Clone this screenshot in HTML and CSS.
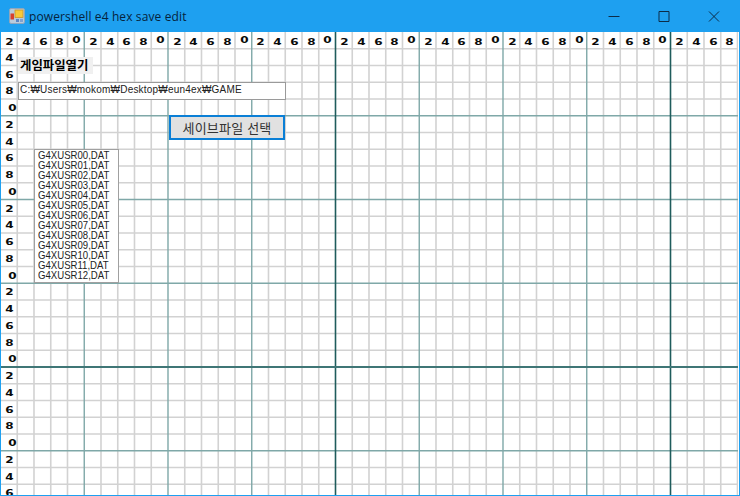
FILE: index.html
```html
<!DOCTYPE html>
<html lang="ko">
<head>
<meta charset="utf-8">
<title>powershell e4 hex save edit</title>
<link rel="stylesheet" href="styles.css">
</head>
<body>
<div class="window">
  <header class="titlebar">
    <svg class="app-icon" width="16" height="16" viewBox="0 0 16 16">
      <rect x="0.5" y="0.5" width="15" height="15" rx="1.5" fill="#b9cbdc" stroke="#8ea6bd"/>
      <rect x="6" y="2" width="8" height="7.5" fill="#f7c93a" stroke="#c9962a" stroke-width="0.8"/>
      <rect x="1.5" y="5.5" width="3.5" height="6" fill="#d8402c"/>
      <rect x="7" y="11" width="3" height="3" fill="#5b86c4"/>
      <rect x="11" y="11" width="3" height="3" fill="#7fa2d2"/>
    </svg>
    <span class="title">powershell e4 hex save edit</span>
    <div class="controls">
      <span class="ctl"><svg width="12" height="12" viewBox="0 0 12 12"><path d="M0.5 6.5H11.5"/></svg></span>
      <span class="ctl"><svg width="12" height="12" viewBox="0 0 12 12"><path d="M1 1.5H11V11.5H1Z"/></svg></span>
      <span class="ctl"><svg width="12" height="12" viewBox="0 0 12 12"><path d="M1 1.5L11 11.5M11 1.5L1 11.5"/></svg></span>
    </div>
  </header>
  <main class="canvas">
    <svg class="grid" width="738" height="463" viewBox="0 0 738 463">
      <path class="minor" d="M17.25 0V463M34 0V463M50.75 0V463M67.5 0V463M101 0V463M117.75 0V463M134.5 0V463M151.25 0V463M184.75 0V463M201.5 0V463M218.25 0V463M235 0V463M268.5 0V463M285.25 0V463M302 0V463M318.75 0V463M352.25 0V463M369 0V463M385.75 0V463M402.5 0V463M436 0V463M452.75 0V463M469.5 0V463M486.25 0V463M519.75 0V463M536.5 0V463M553.25 0V463M570 0V463M603.5 0V463M620.25 0V463M637 0V463M653.75 0V463M687.25 0V463M704 0V463M720.75 0V463M737.5 0V463"/>
      <path class="minor" d="M0 16.75H738M0 33.5H738M0 50.25H738M0 67H738M0 100.5H738M0 117.25H738M0 134H738M0 150.75H738M0 184.25H738M0 201H738M0 217.75H738M0 234.5H738M0 268H738M0 284.75H738M0 301.5H738M0 318.25H738M0 351.75H738M0 368.5H738M0 385.25H738M0 402H738M0 435.5H738M0 452.25H738"/>
      <path class="mid" d="M84.25 0V463M168 0V463M251.75 0V463M419.25 0V463M503 0V463M586.75 0V463M0 83.75H738M0 167.5H738M0 251.25H738M0 418.75H738"/>
      <path class="major-v" d="M335.5 0V463M670.5 0V463"/>
      <path class="major-h" d="M0 335H738"/>
    </svg>
    <div class="top-labels">
      <span>2</span><span>4</span><span>6</span><span>8</span><span class="zero">0</span>
      <span>2</span><span>4</span><span>6</span><span>8</span><span class="zero">0</span>
      <span>2</span><span>4</span><span>6</span><span>8</span><span class="zero">0</span>
      <span>2</span><span>4</span><span>6</span><span>8</span><span class="zero">0</span>
      <span>2</span><span>4</span><span>6</span><span>8</span><span class="zero">0</span>
      <span>2</span><span>4</span><span>6</span><span>8</span><span class="zero">0</span>
      <span>2</span><span>4</span><span>6</span><span>8</span><span class="zero">0</span>
      <span>2</span><span>4</span><span>6</span><span>8</span><span class="zero">0</span>
      <span>2</span><span>4</span><span>6</span><span>8</span>
    </div>
    <div class="body-row">
      <div class="left-labels">
        <span>4</span><span>6</span><span>8</span><span class="zero">0</span>
        <span>2</span><span>4</span><span>6</span><span>8</span><span class="zero">0</span>
        <span>2</span><span>4</span><span>6</span><span>8</span><span class="zero">0</span>
        <span>2</span><span>4</span><span>6</span><span>8</span><span class="zero">0</span>
        <span>2</span><span>4</span><span>6</span><span>8</span><span class="zero">0</span>
        <span>2</span><span>4</span><span>6</span>
      </div>
      <div class="form">
        <div class="heading">게임파일열기</div>
        <div class="path-box">C:₩Users₩mokom₩Desktop₩eun4ex₩GAME</div>
        <button class="save-btn">세이브파일 선택</button>
        <ul class="file-list">
          <li>G4XUSR00,DAT</li>
          <li>G4XUSR01,DAT</li>
          <li>G4XUSR02,DAT</li>
          <li>G4XUSR03,DAT</li>
          <li>G4XUSR04,DAT</li>
          <li>G4XUSR05,DAT</li>
          <li>G4XUSR06,DAT</li>
          <li>G4XUSR07,DAT</li>
          <li>G4XUSR08,DAT</li>
          <li>G4XUSR09,DAT</li>
          <li>G4XUSR10,DAT</li>
          <li>G4XUSR11,DAT</li>
          <li>G4XUSR12,DAT</li>
        </ul>
      </div>
    </div>
  </main>
</div>
</body>
</html>
```
FILE: styles.css
```css
* { box-sizing: border-box; }
html, body { margin: 0; padding: 0; }
body { width: 740px; height: 496px; overflow: hidden; background: #fff; font-family: "Liberation Sans", sans-serif; }

.window {
  width: 740px; height: 496px;
  display: flex; flex-direction: column;
  border-left: 1px solid #1ea0f0;
  border-right: 1px solid #1ea0f0;
  border-bottom: 1px solid #1ea0f0;
  overflow: hidden;
}

.titlebar {
  height: 32px; flex: none;
  display: flex; align-items: center;
  background: #1ea0f0;
  padding-left: 8px;
}
.app-icon { flex: none; }
.title {
  margin-left: 4px;
  font-family: "Open Sans", sans-serif;
  font-size: 12px; letter-spacing: 0.12px; color: #06233c;
  white-space: nowrap;
}
.controls { margin-left: auto; display: flex; }
.ctl { width: 50px; height: 32px; display: flex; align-items: center; justify-content: center; }
.ctl svg { fill: none; stroke: #0c2c48; stroke-width: 1; }

.canvas { position: relative; flex: 1; min-height: 0; overflow: hidden; background: #fff; }
.grid { position: absolute; left: -1px; top: 0; }
.grid path { fill: none; }
.minor { stroke: #d2d2d2; stroke-width: 1.6; }
.mid { stroke: #7fa8a8; stroke-width: 1.4; }
.major-v { stroke: #1f5c5c; stroke-width: 1.6; }
.major-h { stroke: #3f7676; stroke-width: 2; }

.top-labels, .left-labels { position: relative; font-family: "DejaVu Sans", sans-serif; font-weight: 700; font-size: 10px; color: #0a0a0a; }
.top-labels { display: flex; height: 16.75px; }
.top-labels span { flex: 0 0 16.75px; height: 16.75px; display: flex; align-items: center; justify-content: center; padding-top: 3px; transform: scale(1.2, 0.95); }
.top-labels .zero { padding-top: 0; padding-bottom: 1px; }

.body-row { position: relative; display: flex; }
.left-labels { flex: 0 0 17px; display: flex; flex-direction: column; }
.left-labels span { flex: 0 0 16.75px; height: 16.75px; display: flex; align-items: center; justify-content: center; transform: scale(1.2, 0.95); }
.left-labels .zero { padding-left: 5px; }

.form { display: flex; flex-direction: column; align-items: flex-start; }
.heading {
  margin-top: 8px; height: 17px; width: 75px;
  background: #f0f0f0;
  padding-left: 2px;
  font-family: "Noto Sans CJK KR", sans-serif;
  font-weight: 700; font-size: 12.4px; line-height: 17px; color: #000;
  white-space: nowrap;
}
.path-box {
  margin-top: 8px; width: 268px; height: 18px;
  background: #fff; border: 1px solid #9a9a9a;
  padding-left: 1px;
  font-size: 10px; letter-spacing: 0.2px; line-height: 14px; color: #222;
  white-space: nowrap;
}
.save-btn {
  margin: 15px 0 0 151px; width: 116px; height: 25px; padding: 0;
  background: #e1e1e1; border: 2px solid #0a7fd6; border-radius: 0;
  font-family: "Noto Sans CJK KR", sans-serif;
  font-size: 13px; line-height: 19px; color: #333;
  letter-spacing: 0.2px;
}
.file-list {
  list-style: none;
  margin: 9px 0 0 16px; padding: 1px 0 0 3px;
  width: 85px; height: 134px;
  background: #fff; border: 1px solid #a0a0a0;
  font-size: 10px; line-height: 10px; color: #222;
}
.file-list li { height: 10px; white-space: nowrap; transform-origin: left center; transform: scale(0.96, 1.15); }
```
